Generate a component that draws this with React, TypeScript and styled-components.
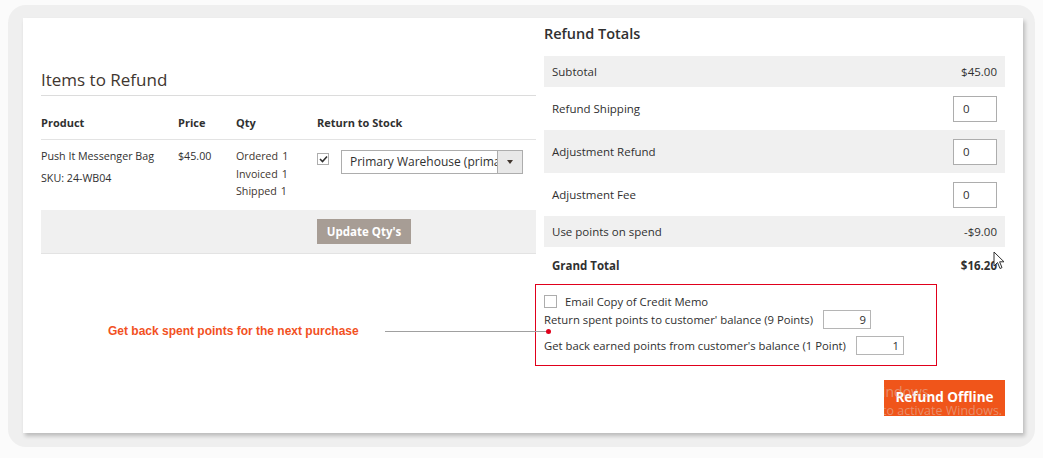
import styled, { createGlobalStyle } from "styled-components";

const GlobalStyle = createGlobalStyle`
  html, body {
    margin: 0;
    padding: 0;
    background: #fbfbfb;
  }
  body {
    font-family: "Open Sans", "DejaVu Sans", sans-serif;
    color: #303030;
  }
  * {
    box-sizing: border-box;
  }
`;

const Frame = styled.div`
  width: 1027px;
  height: 442px;
  margin: 5px 0 0 8px;
  padding: 13px 12px 0 15px;
  background: #efefef;
  border-radius: 18px;
`;

const Card = styled.div`
  position: relative;
  width: 1000px;
  height: 415px;
  padding: 0 18px;
  background: #fff;
  box-shadow: 2px 3px 4px rgba(0, 0, 0, 0.22);
  display: grid;
  grid-template-columns: 495px 461px;
  grid-template-rows: auto auto auto;
  align-content: start;
  column-gap: 8px;
  align-items: start;
`;

const LeftColumn = styled.section`
  padding-top: 50px;
`;

const SectionTitle = styled.h2`
  margin: 0;
  font-size: 17px;
  line-height: 24px;
  font-weight: 400;
  color: #41362f;
  padding-bottom: 3px;
  border-bottom: 1px solid #dcdcdc;
`;

const TableRow = styled.div`
  display: grid;
  grid-template-columns: 137px 58px 81px minmax(0, 1fr);
  align-items: start;
`;

const HeadRow = styled(TableRow)`
  padding: 19px 0 8px;
  border-bottom: 1px solid #e3e3e3;
`;

const HeadCell = styled.div`
  font-size: 11px;
  line-height: 16px;
  font-weight: 700;
  color: #303030;
`;

const BodyRow = styled(TableRow)`
  padding: 8px 0 0;
  height: 70px;
`;

const Cell = styled.div`
  font-size: 10.7px;
  line-height: 16px;
  color: #303030;
`;

const Sku = styled.div`
  margin-top: 6px;
`;

const QtyLine = styled.div<{ $first?: boolean }>`
  margin-top: ${(p) => (p.$first ? "0" : "1.5px")};
  color: #41362f;
  span {
    margin-left: 4px;
  }
`;

const StockCell = styled.div`
  min-width: 0;
  display: flex;
  align-items: flex-start;
  gap: 12px;
  padding-right: 13px;
  margin-top: 2px;
`;

const Check = styled.span<{ $checked?: boolean }>`
  flex: none;
  width: ${(p) => (p.$checked ? "12px" : "13px")};
  height: ${(p) => (p.$checked ? "12px" : "13px")};
  margin-top: ${(p) => (p.$checked ? "3px" : "0")};
  border: 1px solid #adadad;
  background: #fff;
  display: flex;
  align-items: center;
  justify-content: center;
`;

const SelectBox = styled.div`
  flex: 1;
  min-width: 0;
  height: 24px;
  display: flex;
  border: 1px solid #adadad;
  background: #fff;
`;

const SelectText = styled.div`
  flex: 1;
  min-width: 0;
  overflow: hidden;
  white-space: nowrap;
  font-size: 12px;
  line-height: 22px;
  padding-left: 8px;
  color: #303030;
`;

const SelectArrow = styled.div`
  flex: none;
  width: 25px;
  border-left: 1px solid #adadad;
  background: #e8e8e8;
  display: flex;
  align-items: center;
  justify-content: center;
  &::after {
    content: "";
    border-left: 3.5px solid transparent;
    border-right: 3.5px solid transparent;
    border-top: 4px solid #41362f;
  }
`;

const TableFoot = styled(TableRow)`
  height: 44px;
  align-items: center;
  background: #f0f0f0;
  border-bottom: 1px solid #e3e3e3;
`;

const GreyButton = styled.button`
  grid-column: 4;
  width: 94px;
  height: 25px;
  border: 0;
  padding: 0;
  background: #a79d95;
  color: #fff;
  font-family: inherit;
  font-size: 11.5px;
  font-weight: 700;
`;

const RightColumn = styled.section`
  padding-top: 6px;
`;

const TotalsTitle = styled.h2`
  margin: 0 0 12px;
  font-size: 14.5px;
  line-height: 20px;
  font-weight: 600;
  color: #303030;
`;

const TotalRow = styled.div<{ $shaded?: boolean; $tall?: boolean; $bold?: boolean }>`
  display: flex;
  align-items: center;
  justify-content: space-between;
  height: ${(p) => (p.$tall ? "43px" : "31px")};
  padding: 0 8px;
  background: ${(p) => (p.$shaded ? "#f0f0f0" : "transparent")};
  font-size: 11.5px;
  font-weight: ${(p) => (p.$bold ? 700 : 400)};
  color: #303030;
`;

const GrandRow = styled(TotalRow)`
  height: 34px;
  padding-top: 2px;
`;

const AmountInput = styled.div`
  width: 44px;
  height: 26px;
  border: 1px solid #adadad;
  background: #fff;
  font-size: 11.5px;
  line-height: 24px;
  padding-left: 9px;
`;

const Annotation = styled.div`
  grid-row: 2;
  grid-column: 1;
  display: flex;
  align-items: center;
  padding: 43px 0 0 67px;
  margin-right: -13px;
`;

const AnnotationText = styled.span`
  font-family: "Liberation Sans", Arial, sans-serif;
  font-size: 12px;
  font-weight: 700;
  color: #f2511f;
  white-space: nowrap;
`;

const Leader = styled.span`
  flex: 1;
  height: 1px;
  margin-left: 26px;
  background: #a0a0a0;
  position: relative;
  &::after {
    content: "";
    position: absolute;
    right: -2px;
    top: -2px;
    width: 5px;
    height: 5px;
    border-radius: 50%;
    background: #e0001b;
  }
`;

const PointsBox = styled.div`
  grid-row: 2;
  grid-column: 2;
  width: 402px;
  margin: 3px 0 0 -9px;
  padding: 8px 8px 10px;
  border: 1px solid #e0001b;
  font-size: 11.3px;
  color: #303030;
`;

const EmailLine = styled.label`
  display: flex;
  align-items: center;
  gap: 8px;
  height: 16px;
  margin-bottom: 1px;
`;

const PointsLine = styled.div<{ $gap?: number }>`
  display: flex;
  align-items: center;
  gap: 10px;
  height: 19px;
  margin-top: ${(p) => p.$gap ?? 0}px;
`;

const PointsInput = styled.div`
  width: 48px;
  height: 19px;
  border: 1px solid #b5b5b5;
  text-align: right;
  padding-right: 4px;
  line-height: 17px;
`;

const ActionBar = styled.div`
  grid-row: 3;
  grid-column: 2;
  display: flex;
  justify-content: flex-end;
  margin-top: 14px;
`;

const OrangeButton = styled.button`
  position: relative;
  overflow: hidden;
  width: 121px;
  height: 36px;
  border: 0;
  padding: 0 0 2px;
  background: #f0551a;
  color: #fff;
  font-family: inherit;
  font-size: 13.5px;
  font-weight: 700;
`;

const Watermark = styled.span`
  position: absolute;
  left: -2px;
  white-space: nowrap;
  color: rgba(220, 200, 190, 0.5);
  font-weight: 400;
  pointer-events: none;
`;

const Pointer = styled.svg`
  position: absolute;
  left: 970px;
  top: 233px;
`;

const totals = [
  { label: "Subtotal", value: "$45.00" },
  { label: "Refund Shipping", input: "0" },
  { label: "Adjustment Refund", input: "0" },
  { label: "Adjustment Fee", input: "0" },
  { label: "Use points on spend", value: "-$9.00" },
];

export default function App() {
  return (
    <>
      <GlobalStyle />
      <Frame>
        <Card>
          <LeftColumn>
            <SectionTitle>Items to Refund</SectionTitle>
            <HeadRow>
              <HeadCell>Product</HeadCell>
              <HeadCell>Price</HeadCell>
              <HeadCell>Qty</HeadCell>
              <HeadCell>Return to Stock</HeadCell>
            </HeadRow>
            <BodyRow>
              <Cell>
                <div>Push It Messenger Bag</div>
                <Sku>SKU: 24-WB04</Sku>
              </Cell>
              <Cell>$45.00</Cell>
              <Cell>
                <QtyLine $first>
                  Ordered<span>1</span>
                </QtyLine>
                <QtyLine>
                  Invoiced<span>1</span>
                </QtyLine>
                <QtyLine>
                  Shipped<span>1</span>
                </QtyLine>
              </Cell>
              <StockCell>
                <Check $checked>
                  <svg width="9" height="8" viewBox="0 0 9 8">
                    <path d="M1 4 L3.5 6.5 L8 1.5" fill="none" stroke="#303030" strokeWidth="1.6" />
                  </svg>
                </Check>
                <SelectBox>
                  <SelectText>Primary Warehouse (primary)</SelectText>
                  <SelectArrow />
                </SelectBox>
              </StockCell>
            </BodyRow>
            <TableFoot>
              <GreyButton>Update Qty's</GreyButton>
            </TableFoot>
          </LeftColumn>

          <RightColumn>
            <TotalsTitle>Refund Totals</TotalsTitle>
            {totals.map((t, i) => (
              <TotalRow key={t.label} $shaded={i % 2 === 0} $tall={!!t.input}>
                <span>{t.label}</span>
                {t.input ? <AmountInput>{t.input}</AmountInput> : <span>{t.value}</span>}
              </TotalRow>
            ))}
            <GrandRow $bold>
              <span>Grand Total</span>
              <span>$16.20</span>
            </GrandRow>
          </RightColumn>

          <Annotation>
            <AnnotationText>Get back spent points for the next purchase</AnnotationText>
            <Leader />
          </Annotation>

          <PointsBox>
            <EmailLine>
              <Check />
              Email Copy of Credit Memo
            </EmailLine>
            <PointsLine>
              Return spent points to customer' balance (9 Points)
              <PointsInput>9</PointsInput>
            </PointsLine>
            <PointsLine $gap={7}>
              Get back earned points from customer's balance (1 Point)
              <PointsInput>1</PointsInput>
            </PointsLine>
          </PointsBox>

          <ActionBar>
            <OrangeButton>
              <Watermark style={{ top: 2, fontSize: 14 }}>indows</Watermark>
              Refund Offline
              <Watermark style={{ top: 22, fontSize: 12.5 }}>to activate Windows.</Watermark>
            </OrangeButton>
          </ActionBar>

          <Pointer width="12" height="19" viewBox="0 0 12 19">
            <path d="M1 1 L1 15 L4.5 11.5 L7 17.5 L9 16.6 L6.6 10.8 L11 10.8 Z" fill="#fff" stroke="#303030" strokeWidth="1" />
          </Pointer>
        </Card>
      </Frame>
    </>
  );
}
